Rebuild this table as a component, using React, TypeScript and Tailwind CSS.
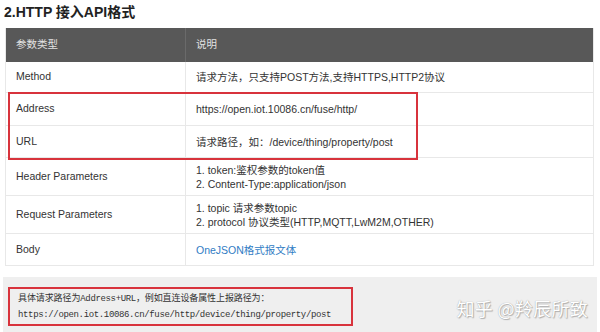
const FONT = {
  fontFamily: '"Liberation Sans", Arial, "Noto Sans CJK SC", sans-serif',
};

type Row = { name: string; lines: string[]; h: string; link?: boolean };

const TOP_ROWS: Row[] = [
  { name: "Method", lines: ["请求方法，只支持POST方法,支持HTTPS,HTTP2协议"], h: "h-[31px]" },
];

const BOXED_ROWS: Row[] = [
  { name: "Address", lines: ["https://open.iot.10086.cn/fuse/http/"], h: "h-[33px]" },
  { name: "URL", lines: ["请求路径，如：/device/thing/property/post"], h: "h-[32px]" },
];

const BOTTOM_ROWS: Row[] = [
  {
    name: "Header Parameters",
    lines: ["1. token:鉴权参数的token值", "2. Content-Type:application/json"],
    h: "h-[38px]",
  },
  {
    name: "Request Parameters",
    lines: ["1. topic 请求参数topic", "2. protocol 协议类型(HTTP,MQTT,LwM2M,OTHER)"],
    h: "h-[38px]",
  },
  { name: "Body", lines: ["OneJSON格式报文体"], h: "h-[32px]", link: true },
];

function TableRow({ row }: { row: Row }) {
  return (
    <div className={`flex border-b border-[#e8e8e8] ${row.h}`}>
      <div className="w-[180px] shrink-0 flex items-center pl-[10px] border-r border-[#e8e8e8]">
        {row.name}
      </div>
      <div
        className={`flex flex-col justify-center pl-[10px] leading-[14px] ${
          row.link ? "text-[#2f7cc4]" : ""
        }`}
      >
        {row.lines.map((l) => (
          <span key={l}>{l}</span>
        ))}
      </div>
    </div>
  );
}

export default function App() {
  return (
    <div
      className="w-[600px] h-[332px] bg-white overflow-hidden text-[#333]"
      style={FONT}
    >
      {/* Title */}
      <div className="h-[28px] pl-[4px] pt-[4px] text-[14px] font-bold text-[#222] leading-[16px]">
        2.HTTP 接入API格式
      </div>

      {/* Table */}
      <div className="ml-[5px] w-[589px] border-r border-l border-[#e8e8e8] text-[10.5px]">
        <div className="flex h-[34px] bg-[#585858] text-[#e2e2e2]">
          <div className="w-[180px] shrink-0 flex items-center pl-[10px] border-r border-[#6a6a6a]">
            参数类型
          </div>
          <div className="flex items-center pl-[10px]">说明</div>
        </div>
        {TOP_ROWS.map((r) => (
          <TableRow key={r.name} row={r} />
        ))}
        <div className="relative">
          {BOXED_ROWS.map((r) => (
            <TableRow key={r.name} row={r} />
          ))}
          <div className="absolute left-[2px] top-[-1px] w-[410px] h-[68px] border-2 border-[#d8333c] pointer-events-none" />
        </div>
        {BOTTOM_ROWS.map((r) => (
          <TableRow key={r.name} row={r} />
        ))}
      </div>

      {/* Code note */}
      <div className="mt-[11px] mx-[3px] h-[60px] bg-[#efefef] flex items-start justify-between pt-[10px]">
        <div
          className="ml-[5px] w-[345px] h-[39px] border-2 border-[#d8333c] flex flex-col justify-center pl-[8px] text-[9px] leading-[16px] text-[#333] tracking-[-0.35px]"
          style={{
            fontFamily: '"Liberation Mono", "Noto Sans CJK SC", monospace',
          }}
        >
          <span>
            <span className="tracking-[-0.1px]">具体请求路径为</span>Address+URL
            <span className="tracking-[-0.1px]">，例如直连设备属性上报路径为：</span>
          </span>
          <span>https://open.iot.10086.cn/fuse/http/device/thing/property/post</span>
        </div>
        <div
          className="mr-[9px] mt-[11px] text-[18px] leading-[21px] text-white tracking-[0.3px]"
          style={{
            fontFamily: '"Noto Sans CJK SC", "Liberation Sans", sans-serif',
            textShadow: "0 0 1px #9a9a9a, 1px 1px 1px #b0b0b0",
          }}
        >
          知乎 @羚辰所致
        </div>
      </div>
    </div>
  );
}
